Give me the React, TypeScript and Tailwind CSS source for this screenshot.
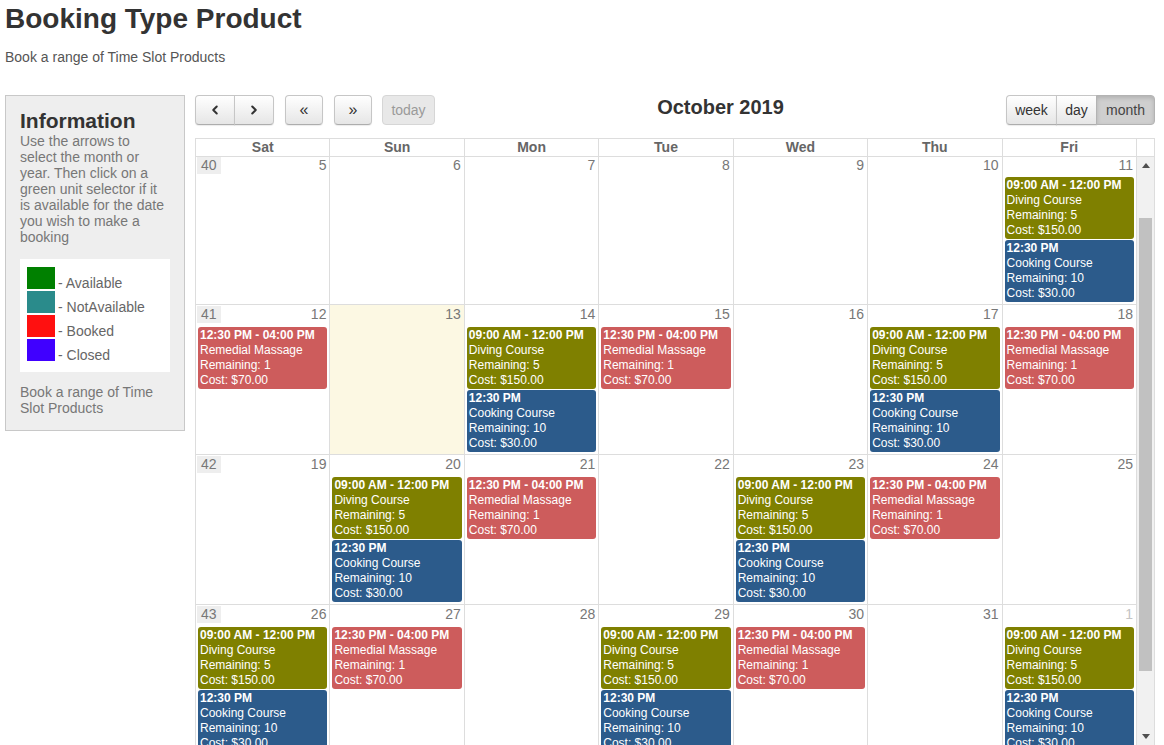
import React from 'react';
import { ChevronLeft, ChevronRight } from 'lucide-react';

type Ev = { kind: 'dive' | 'cook' | 'massage' };

interface DayCell {
  day: number;
  events: Ev[];
  today?: boolean;
  other?: boolean;
}

const DIVE: Ev = { kind: 'dive' };
const COOK: Ev = { kind: 'cook' };
const MASS: Ev = { kind: 'massage' };

const weeks: { num: number; days: DayCell[] }[] = [
  {
    num: 40,
    days: [
      { day: 5, events: [] },
      { day: 6, events: [] },
      { day: 7, events: [] },
      { day: 8, events: [] },
      { day: 9, events: [] },
      { day: 10, events: [] },
      { day: 11, events: [DIVE, COOK] },
    ],
  },
  {
    num: 41,
    days: [
      { day: 12, events: [MASS] },
      { day: 13, events: [], today: true },
      { day: 14, events: [DIVE, COOK] },
      { day: 15, events: [MASS] },
      { day: 16, events: [] },
      { day: 17, events: [DIVE, COOK] },
      { day: 18, events: [MASS] },
    ],
  },
  {
    num: 42,
    days: [
      { day: 19, events: [] },
      { day: 20, events: [DIVE, COOK] },
      { day: 21, events: [MASS] },
      { day: 22, events: [] },
      { day: 23, events: [DIVE, COOK] },
      { day: 24, events: [MASS] },
      { day: 25, events: [] },
    ],
  },
  {
    num: 43,
    days: [
      { day: 26, events: [DIVE, COOK] },
      { day: 27, events: [MASS] },
      { day: 28, events: [] },
      { day: 29, events: [DIVE, COOK] },
      { day: 30, events: [MASS] },
      { day: 31, events: [] },
      { day: 1, events: [DIVE, COOK], other: true },
    ],
  },
];

const dayNames = ['Sat', 'Sun', 'Mon', 'Tue', 'Wed', 'Thu', 'Fri'];

const EventBox: React.FC<{ ev: Ev }> = ({ ev }) => {
  if (ev.kind === 'dive') {
    return (
      <div className="mx-[2px] mb-[1px] h-[62px] rounded-[3px] bg-[#7f8000] px-[2px] pt-[1px] text-[12px] leading-[15px] text-white">
        <div className="font-bold">09:00 AM - 12:00 PM</div>
        <div>Diving Course</div>
        <div>Remaining: 5</div>
        <div>Cost: $150.00</div>
      </div>
    );
  }
  if (ev.kind === 'cook') {
    return (
      <div className="mx-[2px] mb-[1px] h-[62px] rounded-[3px] bg-[#2c5b8b] px-[2px] pt-[1px] text-[12px] leading-[15px] text-white">
        <div className="font-bold">12:30 PM</div>
        <div>Cooking Course</div>
        <div>Remaining: 10</div>
        <div>Cost: $30.00</div>
      </div>
    );
  }
  return (
    <div className="mx-[2px] mb-[1px] h-[62px] rounded-[3px] bg-[#cd5c5c] px-[2px] pt-[1px] text-[12px] leading-[15px] text-white">
      <div className="font-bold">12:30 PM - 04:00 PM</div>
      <div>Remedial Massage</div>
      <div>Remaining: 1</div>
      <div>Cost: $70.00</div>
    </div>
  );
};

const btn =
  'h-[30px] border border-[#c6c6c6] border-b-[#adadad] bg-linear-to-b from-white to-[#e6e6e6] text-[14px] text-[#333] shadow-[0_1px_1px_rgba(0,0,0,0.08)]';

export default function App() {
  return (
    <div className="h-[745px] overflow-hidden bg-white px-[5px] font-['Liberation_Sans',Arial,sans-serif] text-[#333]">
      <h1 className="mt-[4px] text-[28px] font-bold leading-[30px] text-[#333]">Booking Type Product</h1>
      <p className="mt-[15px] text-[14px] leading-[16px] text-[#555]">Book a range of Time Slot Products</p>

      <div className="mt-[30px] flex items-start gap-[10px]">
        {/* sidebar */}
        <aside className="w-[180px] border border-[#c8c8c8] bg-[#eeeeee] px-[14px] pb-[14px] pt-[13px]">
          <h3 className="text-[21px] font-bold leading-[24px] text-[#333]">Information</h3>
          <p className="text-[14px] leading-[16px] text-[#777]">
            Use the arrows to select the month or year. Then click on a green unit selector if it is available for the date
            you wish to make a booking
          </p>
          <div className="mt-[14px] bg-white pb-[10px] pl-[7px] pt-[7px] text-[14px] text-[#666]">
            {[
              ['bg-[#008000]', 'Available'],
              ['bg-[#2a8b8b]', 'NotAvailable'],
              ['bg-[#ff1010]', 'Booked'],
              ['bg-[#4000ff]', 'Closed'],
            ].map(([c, label]) => (
              <div key={label} className="flex h-[24px] items-end">
                <span className={`mb-[1px] inline-block h-[22px] w-[28px] ${c}`} />
                <span className="mb-[1px] ml-[3px] leading-[12px]">- {label}</span>
              </div>
            ))}
          </div>
          <p className="mt-[12px] text-[14px] leading-[16px] text-[#777]">Book a range of Time Slot Products</p>
        </aside>

        {/* calendar */}
        <div className="w-[960px]">
          <div className="flex h-[30px] items-center">
            <div className="flex">
              <button className={`${btn} flex w-[40px] items-center justify-center rounded-l-[4px]`}>
                <ChevronLeft size={14} strokeWidth={3.5} />
              </button>
              <button className={`${btn} -ml-px flex w-[40px] items-center justify-center rounded-r-[4px]`}>
                <ChevronRight size={14} strokeWidth={3.5} />
              </button>
            </div>
            <button className={`${btn} ml-[11px] w-[38px] rounded-[4px] text-[16px]`}>«</button>
            <button className={`${btn} ml-[11px] w-[38px] rounded-[4px] text-[16px]`}>»</button>
            <button className="ml-[10px] h-[30px] w-[53px] rounded-[4px] border border-[#d6d6d6] bg-[#e8e8e8] text-[14px] text-[#9a9a9a]">
              today
            </button>
            <h2 className="flex-1 pb-[6px] text-center text-[20px] font-bold leading-[24px] text-[#333]">October 2019</h2>
            <div className="flex">
              <button className={`${btn} w-[51px] rounded-l-[4px]`}>week</button>
              <button className={`${btn} -ml-px w-[41px]`}>day</button>
              <button className="-ml-px h-[30px] w-[59px] rounded-r-[4px] border border-[#b3b3b3] bg-[#cfcfcf] text-[14px] text-[#444] shadow-[inset_0_2px_4px_rgba(0,0,0,0.15)]">
                month
              </button>
            </div>
          </div>

          <div className="mt-[13px] border-x border-[#dddddd]">
            {/* header */}
            <div className="flex border-y border-[#dddddd]">
              <div className="grid flex-1 grid-cols-7">
                {dayNames.map((d) => (
                  <div key={d} className="h-[17px] border-r border-[#dddddd] text-center text-[14px] font-bold leading-[17px] text-[#666]">
                    {d}
                  </div>
                ))}
              </div>
              <div className="w-[17px]" />
            </div>

            {/* body */}
            <div className="flex">
              <div className="flex-1">
                {weeks.map((w, wi) => (
                  <div
                    key={w.num}
                    className={`grid grid-cols-7 border-b border-[#dddddd] ${wi === 0 ? 'h-[148px]' : 'h-[150px]'}`}
                  >
                    {w.days.map((d, di) => (
                      <div key={di} className={`border-r border-[#dddddd] ${d.today ? 'bg-[#fcf8e3]' : ''}`}>
                        <div
                          className={`flex items-start justify-between ${wi === 0 ? 'h-[20px] pt-0' : 'h-[22px] pt-[1px]'}`}
                        >
                          {di === 0 ? (
                            <span className="ml-px h-[17px] w-[24px] bg-[#eeeeee] pl-[4px] text-[14px] leading-[17px] text-[#777]">
                              {w.num}
                            </span>
                          ) : (
                            <span />
                          )}
                          <span className={`pr-[3px] text-[14px] leading-[17px] ${d.other ? 'text-[#c4c4c4]' : 'text-[#777]'}`}>
                            {d.day}
                          </span>
                        </div>
                        {d.events.map((ev, ei) => (
                          <EventBox key={ei} ev={ev} />
                        ))}
                      </div>
                    ))}
                  </div>
                ))}
              </div>
              {/* scrollbar */}
              <div className="flex w-[17px] flex-col bg-[#f1f1f1]">
                <div className="flex h-[17px] items-center justify-center">
                  <svg width="8" height="5" viewBox="0 0 8 5">
                    <path d="M4 0 L8 5 L0 5 Z" fill="#505050" />
                  </svg>
                </div>
                <div className="mx-[2px] mt-[44px] h-[453px] bg-[#c1c1c1]" />
                <div className="flex h-[70px] items-end justify-center pb-[2px]">
                  <svg width="8" height="5" viewBox="0 0 8 5">
                    <path d="M0 0 L8 0 L4 5 Z" fill="#505050" />
                  </svg>
                </div>
              </div>
            </div>
          </div>
        </div>
      </div>
    </div>
  );
}
